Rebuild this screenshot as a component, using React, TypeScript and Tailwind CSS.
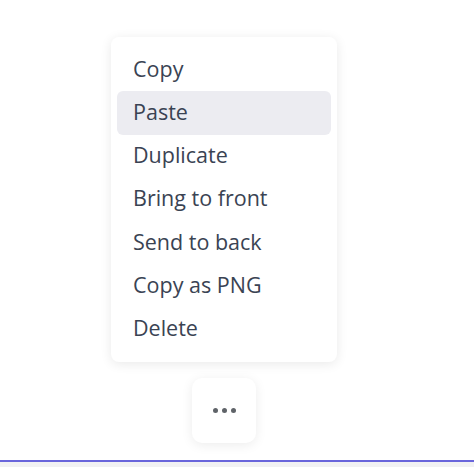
const items = ['Copy', 'Paste', 'Duplicate', 'Bring to front', 'Send to back', 'Copy as PNG', 'Delete'];

export default function App() {
  return (
    <div className="flex h-[467px] w-[474px] flex-col bg-white font-['Open_Sans',sans-serif]">
      <div className="flex flex-1 flex-col items-start pl-[111px] pt-[37px]">
        {/* Context menu */}
        <div className="w-[226px] rounded-lg bg-white px-[6px] py-[11px] shadow-[0_2px_12px_rgba(0,0,0,0.09)]">
          {items.map(label => (
            <div
              key={label}
              className={`flex h-[43.3px] items-center rounded-md pb-[2px] pl-4 text-[21.5px] font-[370] text-[#3a4353] ${
                label === 'Paste' ? 'bg-[#ececf1]' : ''
              }`}
            >
              {label}
            </div>
          ))}
        </div>

        {/* More button */}
        <div className="ml-[81px] mt-[16px] flex h-[65px] w-[64px] items-center justify-center gap-[4px] rounded-[10px] bg-white shadow-[0_2px_12px_rgba(0,0,0,0.08)]">
          <span className="h-[5px] w-[5px] rounded-full bg-[#5f6368]" />
          <span className="h-[5px] w-[5px] rounded-full bg-[#5f6368]" />
          <span className="h-[5px] w-[5px] rounded-full bg-[#5f6368]" />
        </div>
      </div>

      <div className="h-[2px] bg-[#6965db]" />
      <div className="h-[5px] bg-[#f1f1f3]" />
    </div>
  );
}
